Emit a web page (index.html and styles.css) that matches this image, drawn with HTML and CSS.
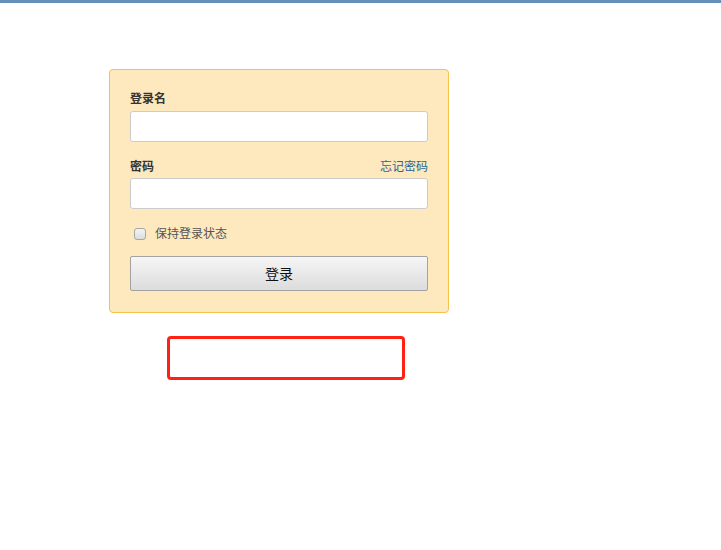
FILE: index.html
```html
<!DOCTYPE html>
<html lang="zh-CN">

<head>
    <meta charset="UTF-8">
    <meta name="viewport" content="width=device-width, initial-scale=1.0">
    <title>登录</title>
    <link rel="stylesheet" href="styles.css">
</head>

<body>
    <div class="topbar"></div>
    <div class="login-box">
        <form>
            <label class="field-label" for="username">登录名</label>
            <input class="field-input" type="text" id="username" name="username">
            <div class="label-row">
                <label class="field-label" for="password">密码</label>
                <a class="forgot" href="#">忘记密码</a>
            </div>
            <input class="field-input" type="password" id="password" name="password">
            <label class="remember">
                <span class="check"></span>
                <span>保持登录状态</span>
            </label>
            <button class="login-btn" type="button">登录</button>
        </form>
    </div>
    <div class="message-box"></div>
</body>

</html>
```

FILE: styles.css
```css
body {
    margin: 0;
    background: #fff;
    font-family: "Liberation Sans", "Noto Sans CJK SC", sans-serif;
    font-size: 12px;
    color: #333;
}

.topbar {
    height: 3px;
    background-color: #6590b8;
}

.login-box {
    width: 340px;
    box-sizing: border-box;
    margin: 66px 0 0 109px;
    padding: 20px 20px 21px;
    background-color: #fee9bf;
    border: 1px solid #f6c24a;
    border-radius: 4px;
}

.field-label {
    display: block;
    line-height: 18px;
    font-weight: 700;
    color: #333;
}

.label-row {
    display: flex;
    justify-content: space-between;
    align-items: center;
    margin-top: 16px;
}

.forgot {
    line-height: 18px;
    color: #2a6496;
    text-decoration: none;
}

.field-input {
    display: block;
    width: 100%;
    height: 31px;
    box-sizing: border-box;
    margin-top: 3px;
    padding: 4px 8px;
    border: 1px solid #ccc;
    border-radius: 3px;
    background: #fff;
    font-size: 13px;
}

.label-row + .field-input {
    margin-top: 2px;
}

.remember {
    display: flex;
    align-items: center;
    gap: 9px;
    margin-top: 16px;
    padding-left: 4px;
    line-height: 18px;
    color: #555;
}

.check {
    width: 12px;
    height: 12px;
    box-sizing: border-box;
    border: 1px solid #a6a6a6;
    border-radius: 3px;
    background: linear-gradient(#f4f4f4, #dcdcdc);
}

.login-btn {
    display: block;
    width: 100%;
    height: 35px;
    margin-top: 13px;
    padding-bottom: 2px;
    border: 1px solid #a3a3a3;
    border-radius: 2px;
    background: linear-gradient(#f6f6f6, #dcdcdc);
    font-family: "Liberation Sans", "Noto Sans CJK SC", sans-serif;
    font-size: 14px;
    color: #111;
    cursor: pointer;
}

.message-box {
    width: 238px;
    height: 44px;
    box-sizing: border-box;
    margin: 23px 0 0 167px;
    border: 3px solid #ff2214;
    border-radius: 4px;
}
```
